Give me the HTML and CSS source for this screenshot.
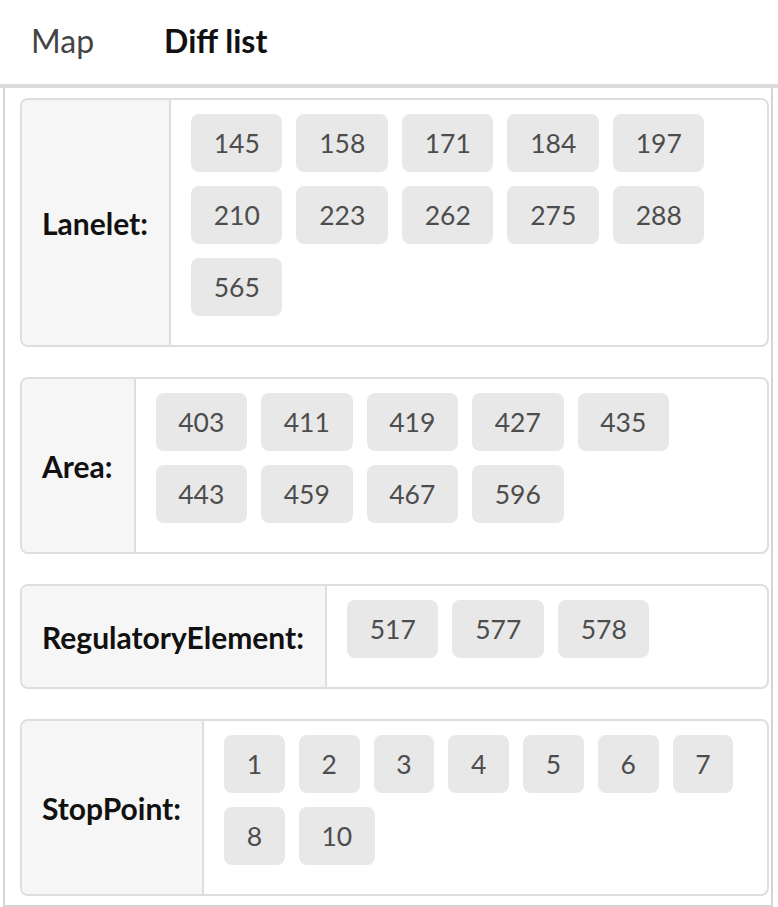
FILE: index.html
```html
<!DOCTYPE html>
<html>
<head>
<meta charset="utf-8">
<link rel="stylesheet" href="styles.css">
</head>
<body>
<div class="tabs">
  <div class="tab">Map</div>
  <div class="tab active">Diff list</div>
</div>
<div class="panel">
  <div class="card">
    <div class="label">Lanelet:</div>
    <div class="ids">
      <span class="pill">145</span><span class="pill">158</span><span class="pill">171</span><span class="pill">184</span><span class="pill">197</span>
      <span class="pill">210</span><span class="pill">223</span><span class="pill">262</span><span class="pill">275</span><span class="pill">288</span>
      <span class="pill">565</span>
    </div>
  </div>
  <div class="card">
    <div class="label">Area:</div>
    <div class="ids">
      <span class="pill">403</span><span class="pill">411</span><span class="pill">419</span><span class="pill">427</span><span class="pill">435</span>
      <span class="pill">443</span><span class="pill">459</span><span class="pill">467</span><span class="pill">596</span>
    </div>
  </div>
  <div class="card">
    <div class="label">RegulatoryElement:</div>
    <div class="ids">
      <span class="pill">517</span><span class="pill">577</span><span class="pill">578</span>
    </div>
  </div>
  <div class="card">
    <div class="label">StopPoint:</div>
    <div class="ids">
      <span class="pill">1</span><span class="pill">2</span><span class="pill">3</span><span class="pill">4</span><span class="pill">5</span><span class="pill">6</span><span class="pill">7</span>
      <span class="pill">8</span><span class="pill">10</span>
    </div>
  </div>
</div>
</body>
</html>
```

FILE: styles.css
```css
html, body {
  margin: 0;
  padding: 0;
  background: #ffffff;
  font-family: Lato, "Liberation Sans", sans-serif;
}

.tabs {
  display: flex;
  gap: 70px;
  padding: 22px 0 0 31px;
  height: 62px;
  border-bottom: 4px solid #dcdcdc;
}

.tab {
  font-size: 32px;
  line-height: 1.2;
  color: #444444;
}

.tab.active {
  font-weight: 700;
  color: #111111;
}

.panel {
  margin-left: 3px;
  width: 770px;
  box-sizing: border-box;
  border: 2px solid #d4d4d4;
  border-top: none;
  padding: 10px 2px 9px 15px;
}

.card {
  display: flex;
  border: 2px solid #dedede;
  border-radius: 8px;
  overflow: hidden;
  background: #ffffff;
  margin-bottom: 30px;
}

.card:last-child {
  margin-bottom: 0;
}

.label {
  flex: none;
  display: flex;
  align-items: center;
  padding: 0 21px 0 20px;
  background: #f6f6f6;
  border-right: 2px solid #dedede;
  font-size: 30px;
  font-weight: 700;
  color: #111111;
}

.ids {
  flex: 1;
  display: flex;
  flex-wrap: wrap;
  align-content: flex-start;
  padding: 14px 0 15px 20px;
}

.pill {
  display: block;
  margin: 0 14px 14px 0;
  padding: 13px 22.7px;
  background: #e8e8e8;
  border-radius: 8px;
  font-size: 26.5px;
  line-height: 32px;
  color: #4d4d4d;
}
```
